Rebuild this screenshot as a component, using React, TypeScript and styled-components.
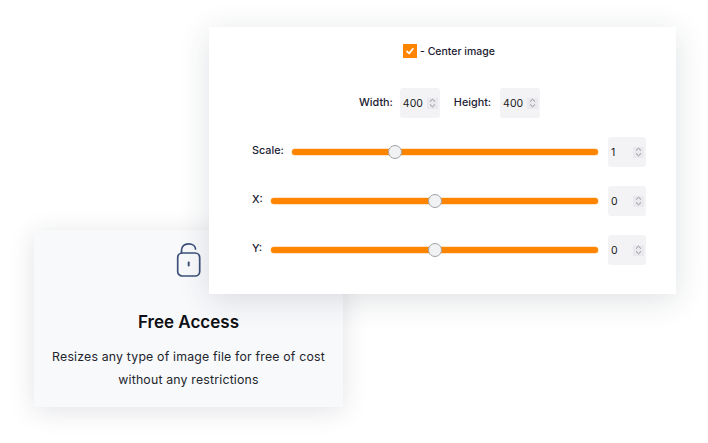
import React from "react";
import styled, { createGlobalStyle } from "styled-components";

const Global = createGlobalStyle`
  html, body { margin: 0; padding: 0; background: #fff; }
  body { font-family: Inter, "Liberation Sans", sans-serif; }
`;

const Stage = styled.div`
  position: relative;
  width: 708px;
  height: 443px;
  overflow: hidden;
  background: #fff;
  padding: 230px 0 0 34px;
  box-sizing: border-box;
`;

const Card = styled.section`
  width: 309px;
  height: 177px;
  box-sizing: border-box;
  background: #f8f9fb;
  box-shadow: 0 4px 24px rgba(30, 40, 60, 0.13);
  display: flex;
  flex-direction: column;
  align-items: center;
  padding-top: 13px;
`;

const LockIcon = styled.svg`
  width: 30px;
  height: 34px;
  display: block;
  color: #3b5179;
`;

const Title = styled.h3`
  margin: 34px 0 0;
  font-size: 17px;
  line-height: 22px;
  font-weight: 600;
  color: #0e0f14;
`;

const Body = styled.p`
  margin: 12px 0 0;
  font-size: 12.3px;
  line-height: 23px;
  text-align: center;
  color: #23252c;
  letter-spacing: 0.19px;
`;

const Panel = styled.section`
  position: absolute;
  left: 209px;
  top: 27px;
  width: 467px;
  height: 267px;
  box-sizing: border-box;
  background: #fff;
  box-shadow: 0 6px 30px rgba(30, 40, 60, 0.14);
  padding: 16px 30px 0 43px;
  display: flex;
  flex-direction: column;
`;

const CheckRow = styled.label`
  display: flex;
  align-items: center;
  justify-content: center;
  gap: 3px;
  height: 16px;
  margin-left: 9px;
  margin-right: 9px;
  font-size: 10.5px;
  font-weight: 500;
  color: #1c2033;
`;

const CheckBox = styled.span`
  width: 14px;
  height: 14px;
  background: #ff8500;
  display: flex;
  align-items: center;
  justify-content: center;
`;

const SizeRow = styled.div`
  display: flex;
  justify-content: flex-start;
  align-items: center;
  margin-top: 29px;
  padding-left: 107px;
`;

const SizeGroup = styled.div<{ $gap: number }>`
  display: flex;
  align-items: center;
  gap: ${(p) => p.$gap}px;
  margin-right: 14px;
`;

const Label = styled.span`
  font-size: 10.8px;
  font-weight: 500;
  color: #1c2033;
  position: relative;
  top: -1px;
`;

const SliderRow = styled.div`
  display: flex;
  align-items: center;
  height: 30px;
  margin-top: 19px;
`;

const SliderLabel = styled(Label)<{ $width: number }>`
  width: ${(p) => p.$width}px;
  flex: none;
  top: -2px;
`;

const Track = styled.div`
  flex: 1;
  position: relative;
  height: 6px;
  border-radius: 3px;
  background: #ff8500;
  box-shadow: 0 0 0 0.5px rgba(255, 133, 0, 0.45);
  margin-right: 10px;
`;

const Thumb = styled.span`
  position: absolute;
  top: 50%;
  width: 12px;
  height: 12px;
  transform: translate(-50%, -50%);
  border-radius: 50%;
  background: #f1f2f3;
  border: 1px solid #a0a2a6;
`;

const NumberBox = styled.div<{ $w: number }>`
  width: ${(p) => p.$w}px;
  height: 30px;
  flex: none;
  box-sizing: border-box;
  background: #f3f3f5;
  border-radius: 3px;
  display: flex;
  align-items: center;
  justify-content: space-between;
  padding: 0 2px 0 3px;
  font-size: 10.5px;
  color: #1a1a1a;
`;

const Spinner = styled.span`
  width: 11px;
  height: 11px;
  background: #e9e9ee;
  display: flex;
  align-items: center;
  justify-content: center;
`;

const Arrows = () => (
  <Spinner>
    <svg width="7" height="10" viewBox="0 0 7 10" fill="none" stroke="#85858f" strokeWidth="0.9">
      <path d="M1 3.6 3.5 1.2 6 3.6" />
      <path d="M1 6.4 3.5 8.8 6 6.4" />
    </svg>
  </Spinner>
);

const sliders = [
  { label: "Scale:", width: 40, pos: "33.7%", value: "1" },
  { label: "X:", width: 19, pos: "50%", value: "0" },
  { label: "Y:", width: 19, pos: "50%", value: "0" },
];

export default function App() {
  return (
    <Stage>
      <Global />
      <Card>
        <LockIcon viewBox="0 0 30 34" fill="none" stroke="currentColor" strokeWidth="1.7" strokeLinecap="round">
          <path d="M7.5 10V7.5C7.5 3.5 10.3 0.9 14.5 0.9S21.5 3 21.5 6" />
          <rect x="3.7" y="10" width="22" height="23" rx="4.5" />
          <path d="M14.7 19.5V22.5" strokeWidth="2" />
        </LockIcon>
        <Title>Free Access</Title>
        <Body>
          Resizes any type of image file for free of cost
          <br />
          without any restrictions
        </Body>
      </Card>
      <Panel>
        <CheckRow>
          <CheckBox>
            <svg width="10" height="10" viewBox="0 0 10 10" fill="none" stroke="#fff" strokeWidth="1.7" strokeLinecap="round" strokeLinejoin="round">
              <path d="M2 5.4 4.1 7.4 8 2.8" />
            </svg>
          </CheckBox>
          <span>- Center image</span>
        </CheckRow>
        <SizeRow>
          <SizeGroup $gap={7}>
            <Label>Width:</Label>
            <NumberBox $w={40}>400<Arrows /></NumberBox>
          </SizeGroup>
          <SizeGroup $gap={9}>
            <Label>Height:</Label>
            <NumberBox $w={40}>400<Arrows /></NumberBox>
          </SizeGroup>
        </SizeRow>
        {sliders.map((s) => (
          <SliderRow key={s.label}>
            <SliderLabel $width={s.width}>{s.label}</SliderLabel>
            <Track>
              <Thumb style={{ left: s.pos }} />
            </Track>
            <NumberBox $w={38}>{s.value}<Arrows /></NumberBox>
          </SliderRow>
        ))}
      </Panel>
    </Stage>
  );
}
